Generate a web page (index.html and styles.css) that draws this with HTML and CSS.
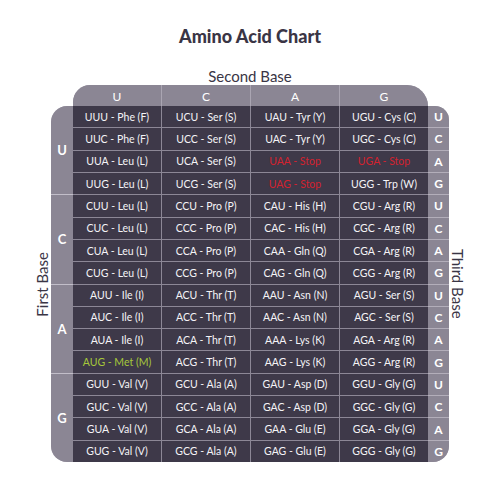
FILE: index.html
```html
<!DOCTYPE html>
<html>
<head>
    <title>Amino Acid Chart</title>
    <link rel="stylesheet" href="styles.css">
</head>
<body>
    <h1 class="title">Amino Acid Chart</h1>
    <div class="axis-top">Second Base</div>
    <div class="chart">
        <div class="head">
            <div>U</div><div>C</div><div>A</div><div>G</div>
        </div>
        <div class="axis-side first">First Base</div>
        <div class="first-base">
            <div>U</div><div>C</div><div>A</div><div>G</div>
        </div>
        <div class="codons">
            <div>UUU - Phe (F)</div><div>UCU - Ser (S)</div><div>UAU - Tyr (Y)</div><div>UGU - Cys (C)</div>
            <div>UUC - Phe (F)</div><div>UCC - Ser (S)</div><div>UAC - Tyr (Y)</div><div>UGC - Cys (C)</div>
            <div>UUA - Leu (L)</div><div>UCA - Ser (S)</div><div class="stop">UAA - Stop</div><div class="stop">UGA - Stop</div>
            <div>UUG - Leu (L)</div><div>UCG - Ser (S)</div><div class="stop">UAG - Stop</div><div>UGG - Trp (W)</div>

            <div>CUU - Leu (L)</div><div>CCU - Pro (P)</div><div>CAU - His (H)</div><div>CGU - Arg (R)</div>
            <div>CUC - Leu (L)</div><div>CCC - Pro (P)</div><div>CAC - His (H)</div><div>CGC - Arg (R)</div>
            <div>CUA - Leu (L)</div><div>CCA - Pro (P)</div><div>CAA - Gln (Q)</div><div>CGA - Arg (R)</div>
            <div>CUG - Leu (L)</div><div>CCG - Pro (P)</div><div>CAG - Gln (Q)</div><div>CGG - Arg (R)</div>

            <div>AUU - Ile (I)</div><div>ACU - Thr (T)</div><div>AAU - Asn (N)</div><div>AGU - Ser (S)</div>
            <div>AUC - Ile (I)</div><div>ACC - Thr (T)</div><div>AAC - Asn (N)</div><div>AGC - Ser (S)</div>
            <div>AUA - Ile (I)</div><div>ACA - Thr (T)</div><div>AAA - Lys (K)</div><div>AGA - Arg (R)</div>
            <div class="start">AUG - Met (M)</div><div>ACG - Thr (T)</div><div>AAG - Lys (K)</div><div>AGG - Arg (R)</div>

            <div>GUU - Val (V)</div><div>GCU - Ala (A)</div><div>GAU - Asp (D)</div><div>GGU - Gly (G)</div>
            <div>GUC - Val (V)</div><div>GCC - Ala (A)</div><div>GAC - Asp (D)</div><div>GGC - Gly (G)</div>
            <div>GUA - Val (V)</div><div>GCA - Ala (A)</div><div>GAA - Glu (E)</div><div>GGA - Gly (G)</div>
            <div>GUG - Val (V)</div><div>GCG - Ala (A)</div><div>GAG - Glu (E)</div><div>GGG - Gly (G)</div>
        </div>
        <div class="third-base">
            <div>U</div><div>C</div><div>A</div><div>G</div>
            <div>U</div><div>C</div><div>A</div><div>G</div>
            <div>U</div><div>C</div><div>A</div><div>G</div>
            <div>U</div><div>C</div><div>A</div><div>G</div>
        </div>
        <div class="axis-side third">Third Base</div>
    </div>
</body>
</html>
```

FILE: styles.css
```css
body { margin: 0; background: #fff; font-family: Lato, "Open Sans", sans-serif; color: #3a3545; }

.title { margin: 24px 0 0; font-size: 18px; line-height: 24px; font-weight: 900; text-align: center; }
.axis-top { margin-top: 19px; font-size: 15px; line-height: 18px; text-align: center; }

.chart {
    display: grid;
    grid-template-columns: 18px 22px 355px 21px 18px;
    grid-template-rows: 21px 356px;
    justify-content: center;
}

/* second base header */
.head {
    grid-column: 3; grid-row: 1;
    display: grid; grid-template-columns: repeat(4, 1fr); gap: 1px;
    background: #aaa5b2;
    border-radius: 18px 22px 0 0;
    overflow: hidden;
}
.head div { background: #8b8694; color: #fff; font-size: 12px; display: flex; align-items: center; justify-content: center; padding-top: 1px; }

/* first base column */
.first-base {
    grid-column: 2; grid-row: 2;
    display: grid; grid-template-rows: repeat(4, 1fr); gap: 1px;
    background: #c2bec9;
    border-radius: 16px 0 0 16px;
    overflow: hidden;
}
.first-base div { background: #8b8694; color: #fff; font-size: 13px; font-weight: 700; display: flex; align-items: center; justify-content: center; }

/* codon cells */
.codons {
    grid-column: 3; grid-row: 2;
    display: grid; grid-template-columns: repeat(4, 1fr); grid-template-rows: repeat(16, 1fr); gap: 1px;
    background: #8c8796;
}
.codons div { background: #3e3949; color: #f5f4f7; font-size: 10.5px; display: flex; align-items: center; justify-content: center; }
.codons .stop { color: #d3222f; }
.codons .start { color: #a6c83a; }

/* third base column */
.third-base {
    grid-column: 4; grid-row: 2;
    display: grid; grid-template-rows: repeat(16, 1fr); gap: 1px;
    background: #b3aeba;
    border-radius: 0 14px 16px 0;
    overflow: hidden;
}
.third-base div { background: #8b8694; color: #fff; font-size: 12px; font-weight: 700; display: flex; align-items: center; justify-content: center; }

/* rotated axis labels */
.axis-side { grid-row: 2; align-self: center; justify-self: center; writing-mode: vertical-rl; font-size: 15px; line-height: 18px; white-space: nowrap; }
.axis-side.first { grid-column: 1; transform: rotate(180deg); }
.axis-side.third { grid-column: 5; }
```
